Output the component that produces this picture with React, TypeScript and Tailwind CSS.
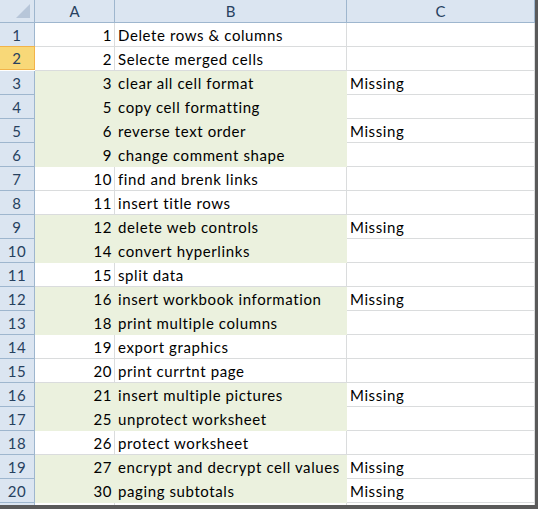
const rows: { n: number; a: number; b: string; c?: string; green?: boolean }[] = [
  { n: 1, a: 1, b: "Delete rows & columns" },
  { n: 2, a: 2, b: "Selecte merged cells" },
  { n: 3, a: 3, b: "clear all cell format", c: "Missing", green: true },
  { n: 4, a: 5, b: "copy cell formatting", green: true },
  { n: 5, a: 6, b: "reverse text order", c: "Missing", green: true },
  { n: 6, a: 9, b: "change comment shape", green: true },
  { n: 7, a: 10, b: "find and brenk links" },
  { n: 8, a: 11, b: "insert title rows" },
  { n: 9, a: 12, b: "delete web controls", c: "Missing", green: true },
  { n: 10, a: 14, b: "convert hyperlinks", green: true },
  { n: 11, a: 15, b: "split data" },
  { n: 12, a: 16, b: "insert workbook information", c: "Missing", green: true },
  { n: 13, a: 18, b: "print multiple columns", green: true },
  { n: 14, a: 19, b: "export graphics" },
  { n: 15, a: 20, b: "print currtnt page" },
  { n: 16, a: 21, b: "insert multiple pictures", c: "Missing", green: true },
  { n: 17, a: 25, b: "unprotect worksheet", green: true },
  { n: 18, a: 26, b: "protect worksheet" },
  { n: 19, a: 27, b: "encrypt and decrypt cell values", c: "Missing", green: true },
  { n: 20, a: 30, b: "paging subtotals", c: "Missing", green: true },
  { n: 21, a: 0, b: "" },
]

const cell = "h-6 flex items-end pb-0 border-b border-r tracking-[0.6px]"

export default function App() {
  return (
    <div
      className="w-[538px] h-[509px] bg-white overflow-hidden"
      style={{ fontFamily: "Lato, 'Liberation Sans', sans-serif" }}
    >
      <div className="w-[538px] h-[509px] border-r-[3px] border-b-[4px] border-[#5a5a5a] overflow-hidden">
        <div className="grid grid-cols-[35px_80px_232px_1fr] text-[15px] text-black">
          {/* header row */}
          <div className="h-[23px] bg-[#dbe5f1] border-b border-r border-[#9eb6ce] flex items-end justify-end pr-[4px] pb-[4px]">
            <svg width="14" height="14" viewBox="0 0 14 14">
              <polygon points="14,0 14,14 0,14" fill="#b7c6d9" />
            </svg>
          </div>
          {["A", "B", "C"].map(l => (
            <div
              key={l}
              className="h-[23px] bg-[#dbe5f1] border-b border-r border-[#9eb6ce] flex items-center justify-center text-[#27415f]"
            >
              {l}
            </div>
          ))}

          {rows.map(r => {
            const sel = r.n === 2
            const last = r.n === 21
            const fill = r.green ? "bg-[#ebf1de] border-[#ebf1de]" : "bg-white border-[#dadcdd]"
            return [
              <div
                key={`h${r.n}`}
                className={`h-6 flex items-end pb-0 justify-center border-b border-r text-[#27415f] tracking-[0.6px] ${
                  sel
                    ? "bg-[#f8d878] border-[#f2b349] border-t -mt-px"
                    : "bg-[#dbe5f1] border-[#9eb6ce]"
                }`}
              >
                {last ? "" : r.n}
              </div>,
              <div key={`a${r.n}`} className={`${cell} ${fill} justify-end pr-[2px]`}>
                {r.a ? r.a : ""}
              </div>,
              <div key={`b${r.n}`} className={`${cell} ${fill} pl-[3px] whitespace-nowrap`}>
                {r.b}
              </div>,
              <div key={`c${r.n}`} className={`${cell} bg-white border-[#dadcdd] pl-[3px]`}>
                {r.c ?? ""}
              </div>,
            ]
          })}
        </div>
      </div>
    </div>
  )
}
